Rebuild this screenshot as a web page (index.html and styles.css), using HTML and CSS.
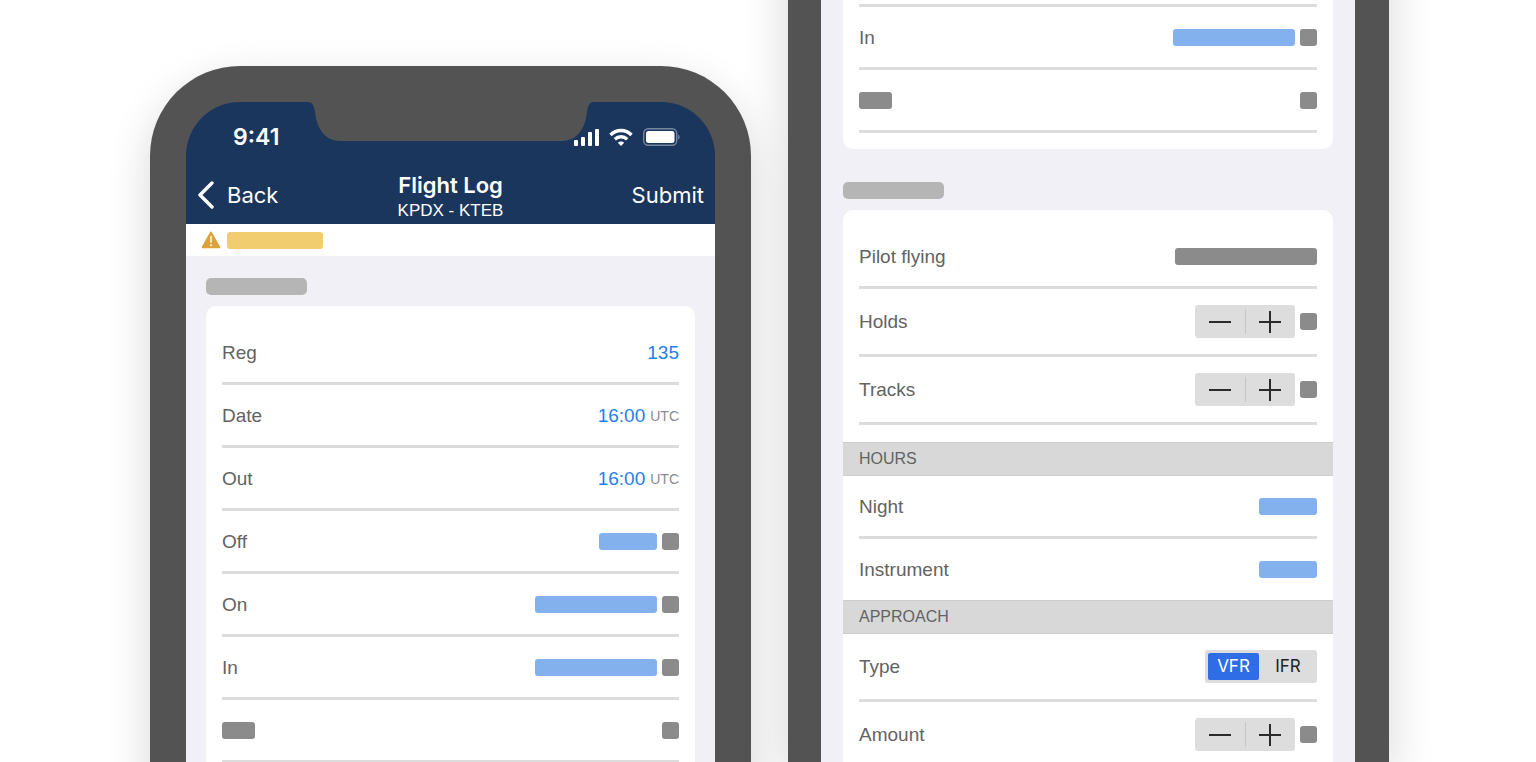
FILE: index.html
```
<!doctype html>
<html lang="en">
<head>
	<meta charset="utf-8">
	<meta name="viewport" content="width=device-width, initial-scale=1.0">
	<title>Flight Log</title>
	<link rel="stylesheet" href="styles.css">
</head>
<body>
<main class="stage">
	<section class="phone phone-top">
		<svg class="notch" width="286" height="39" viewBox="0 0 286 39" aria-hidden="true">
			<path d="M0 0C4 0 6 3 7 10C9 28 18 39 32 39H254C268 39 277 28 279 10C280 3 282 0 286 0Z" fill="#535353"/>
		</svg>
		<div class="screen">
			<header class="header">
				<div class="status">
					<span class="clock">9:41</span>
					<div class="status-icons">
						<svg width="25" height="18" viewBox="0 0 25 18" fill="#fff" aria-hidden="true">
							<rect x="0" y="12" width="4" height="6" rx="1"/>
							<rect x="7" y="9" width="4" height="9" rx="1"/>
							<rect x="14" y="4" width="4" height="14" rx="1"/>
							<rect x="21" y="1" width="4" height="17" rx="1"/>
						</svg>
						<svg width="24" height="18" viewBox="0 0 24 18" fill="none" stroke="#fff" stroke-width="3.4" aria-hidden="true">
							<path d="M1.500 7C7.500 1 16.500 1 22.500 7"/>
							<path d="M5.800 11.200C9.300 8 14.700 8 18.200 11.200"/>
							<path d="M12 18L8.800 14.800C10.500 13.200 13.500 13.200 15.200 14.800Z" fill="#fff" stroke="none"/>
						</svg>
						<svg width="37" height="18" viewBox="0 0 37 18" aria-hidden="true">
							<rect x=".7" y=".7" width="33" height="16.600" rx="4.500" fill="none" stroke="#fff" stroke-opacity=".4" stroke-width="1.400"/>
							<rect x="3" y="3" width="28.500" height="12" rx="2.500" fill="#fff"/>
							<path d="M35.200 6.500C37 7.500 37 10.500 35.200 11.500Z" fill="#fff" fill-opacity=".45"/>
						</svg>
					</div>
				</div>
				<nav class="nav">
					<a class="back" href="#">
						<svg width="18" height="28" viewBox="0 0 18 28" fill="none" stroke="#fff" stroke-width="3.400" stroke-linecap="round" stroke-linejoin="round" aria-hidden="true">
							<path d="M15 2L3 14L15 26"/>
						</svg>
						Back
					</a>
					<div class="heading">
						<h1>Flight Log</h1>
						<p>KPDX - KTEB</p>
					</div>
					<button class="submit" type="button">Submit</button>
				</nav>
			</header>
			<div class="alert">
				<svg width="20" height="18" viewBox="0 0 20 18" aria-hidden="true">
					<path d="M10 1.500L18.300 16.200H1.700Z" fill="#dca23c" stroke="#dca23c" stroke-width="2" stroke-linejoin="round"/>
					<path d="M10 5.800V11" stroke="#f7e6c4" stroke-width="2" stroke-linecap="round"/>
					<circle cx="10" cy="14.100" r="1.200" fill="#f7e6c4"/>
				</svg>
				<span class="bar bar-yellow"></span>
			</div>
			<div class="content">
				<div class="section-title"></div>
				<div class="card">
					<div class="row"><span>Reg</span><span class="value">135</span></div>
					<div class="row"><span>Date</span><span class="value">16:00 <small>UTC</small></span></div>
					<div class="row"><span>Out</span><span class="value">16:00 <small>UTC</small></span></div>
					<div class="row"><span>Off</span><span class="value"><i class="bar bar-blue"></i><i class="bar"></i></span></div>
					<div class="row"><span>On</span><span class="value"><i class="bar bar-blue bar-long"></i><i class="bar"></i></span></div>
					<div class="row"><span>In</span><span class="value"><i class="bar bar-blue bar-long"></i><i class="bar"></i></span></div>
					<div class="row"><i class="bar bar-label"></i><i class="bar"></i></div>
				</div>
			</div>
		</div>
	</section>

	<section class="phone phone-scrolled">
		<div class="screen">
			<div class="content">
				<div class="card card-end">
					<div class="row"><span>In</span><span class="value"><i class="bar bar-blue bar-long"></i><i class="bar"></i></span></div>
					<div class="row"><i class="bar bar-label"></i><i class="bar"></i></div>
				</div>
				<div class="section-title"></div>
				<div class="card">
					<div class="row"><span>Pilot flying</span><i class="bar bar-name"></i></div>
					<div class="row row-tall">
						<span>Holds</span>
						<div class="value">
							<div class="stepper">
								<button type="button" aria-label="Fewer holds"><svg width="24" height="24" viewBox="0 0 24 24"><path d="M1 12H23"/></svg></button>
								<button type="button" aria-label="More holds"><svg width="24" height="24" viewBox="0 0 24 24"><path d="M1 12H23M12 1V23"/></svg></button>
							</div>
							<i class="bar"></i>
						</div>
					</div>
					<div class="row row-tall">
						<span>Tracks</span>
						<div class="value">
							<div class="stepper">
								<button type="button" aria-label="Fewer tracks"><svg width="24" height="24" viewBox="0 0 24 24"><path d="M1 12H23"/></svg></button>
								<button type="button" aria-label="More tracks"><svg width="24" height="24" viewBox="0 0 24 24"><path d="M1 12H23M12 1V23"/></svg></button>
							</div>
							<i class="bar"></i>
						</div>
					</div>
					<h2 class="band band-spaced">HOURS</h2>
					<div class="row"><span>Night</span><i class="bar bar-blue"></i></div>
					<div class="row row-last"><span>Instrument</span><i class="bar bar-blue"></i></div>
					<h2 class="band">APPROACH</h2>
					<div class="row row-tall">
						<span>Type</span>
						<div class="segmented">
							<input type="radio" name="type" id="vfr" checked>
							<label for="vfr">VFR</label>
							<input type="radio" name="type" id="ifr">
							<label for="ifr">IFR</label>
						</div>
					</div>
					<div class="row row-tall row-last">
						<span>Amount</span>
						<div class="value">
							<div class="stepper">
								<button type="button" aria-label="Lower amount"><svg width="24" height="24" viewBox="0 0 24 24"><path d="M1 12H23"/></svg></button>
								<button type="button" aria-label="Raise amount"><svg width="24" height="24" viewBox="0 0 24 24"><path d="M1 12H23M12 1V23"/></svg></button>
							</div>
							<i class="bar"></i>
						</div>
					</div>
				</div>
			</div>
		</div>
	</section>
</main>
</body>
</html>
```
FILE: styles.css
```
* {
	box-sizing: border-box;
}
body {
	margin: 0;
	background: #fff;
	color: #636363;
	font-family: "Liberation Sans", Arial, sans-serif;
	font-size: 19px;
	line-height: 24px;
}
h1, h2, p {
	margin: 0;
}
button {
	border: 0;
	padding: 0;
	background: none;
	font: inherit;
	color: inherit;
}

/* two phones side by side, cut off by the window */
.stage {
	display: flex;
	justify-content: center;
	gap: 37px;
	height: 100vh;
	padding-left: 3px;
	overflow: hidden;
}
.phone {
	position: relative;
	flex: 0 1 601px;
	min-height: 100vh;
	background: #535353;
	box-shadow: 0 16px 44px rgba(0, 0, 0, 0.16);
}
.phone-top {
	margin-top: 66px;
	padding: 36px 36px 0;
	border-radius: 90px 90px 0 0;
}
.phone-scrolled {
	margin-top: -60px;
	padding: 60px 34px 0 33px;
}
.phone-top .screen {
	border-radius: 54px 54px 0 0;
	overflow: hidden;
}
.notch {
	position: absolute;
	top: 36px;
	left: 50%;
	transform: translateX(-50%);
}

/* header */
.header {
	background: #1b365d;
	color: #fff;
	font-family: Inter, sans-serif;
	font-size: 22px;
}
.status {
	display: flex;
	justify-content: space-between;
	align-items: center;
	height: 70px;
	padding: 0 35px 0 47px;
}
.clock {
	font-size: 23px;
	font-weight: 600;
}
.status-icons {
	display: flex;
	gap: 10px;
}
.nav {
	display: grid;
	grid-template-columns: 1fr auto 1fr;
	align-items: center;
	padding: 0 11px;
}
.back {
	display: flex;
	align-items: center;
	gap: 12px;
	padding-bottom: 6px;
	color: inherit;
	text-decoration: none;
}
.heading {
	line-height: 26px;
	text-align: center;
}
.heading h1 {
	font-size: 22px;
	font-weight: 600;
}
.heading p {
	font-family: "Liberation Sans", Arial, sans-serif;
	font-size: 17px;
}
.submit {
	justify-self: end;
	padding-bottom: 6px;
}
.alert {
	display: flex;
	align-items: center;
	gap: 6px;
	height: 32px;
	padding-left: 15px;
	background: #fff;
}

/* placeholder bars */
.bar {
	display: block;
	width: 17px;
	height: 17px;
	border-radius: 3px;
	background: #8b8b8b;
}
.bar-blue {
	width: 58px;
	background: #82b1ed;
}
.bar-long {
	width: 122px;
}
.bar-label {
	width: 33px;
}
.bar-name {
	width: 142px;
}
.bar-yellow {
	width: 96px;
	background: #f1cd6f;
}

/* cards */
.content {
	padding: 22px 20px;
	background: #f0f0f6;
}
.phone-scrolled .content {
	padding: 0 22px;
}
.section-title {
	width: 101px;
	height: 17px;
	margin-bottom: 11px;
	border-radius: 5px;
	background: #b5b5b5;
}
.card {
	padding: 16px 0;
	border-radius: 10px;
	background: #fff;
}
.card-end {
	margin-bottom: 33px;
	padding-top: 4px;
	border-radius: 0 0 10px 10px;
}
.card-end .row:first-child {
	height: 66px;
	border-top: 3px solid #dcdcdc;
}
.row {
	display: flex;
	justify-content: space-between;
	align-items: center;
	height: 63px;
	margin: 0 16px;
	border-bottom: 3px solid #dcdcdc;
}
.row > span {
	padding-top: 1px;
}
.row-tall {
	height: 68px;
}
.row-last {
	border-bottom-color: transparent;
}
.value {
	display: flex;
	align-items: center;
	gap: 5px;
	color: #2680eb;
}
.value small {
	font-size: 14px;
	color: #8b8b8b;
}
.band {
	height: 34px;
	margin-top: -2px;
	padding: 0 16px;
	border: 1px solid #cdcdcd;
	border-width: 1px 0;
	background: #d8d8d8;
	font-size: 16px;
	font-weight: 400;
	line-height: 32px;
}
.band-spaced {
	margin-top: 17px;
}

/* controls */
.stepper {
	display: flex;
	align-items: center;
	width: 100px;
	height: 33px;
	border-radius: 3px;
	background: #ddd;
}
.stepper button {
	display: flex;
	flex: 1;
	align-items: center;
	justify-content: center;
	height: 25px;
}
.stepper button + button {
	border-left: 1px solid #c6c6c6;
}
.stepper path {
	fill: none;
	stroke: #2b2b2b;
	stroke-width: 2;
}
.segmented {
	display: flex;
	width: 112px;
	padding: 3px 0 3px 3px;
	border-radius: 3px;
	background: #ddd;
	color: #222;
	font-family: Inter, sans-serif;
	font-size: 17px;
	line-height: 27px;
	text-align: center;
}
.segmented input {
	appearance: none;
	width: 0;
	margin: 0;
}
.segmented label {
	flex: 1 0 51px;
	border-radius: 2px;
}
.segmented input:checked + label {
	flex-grow: 0;
	background: #2f6de6;
	color: #fff;
}
```
